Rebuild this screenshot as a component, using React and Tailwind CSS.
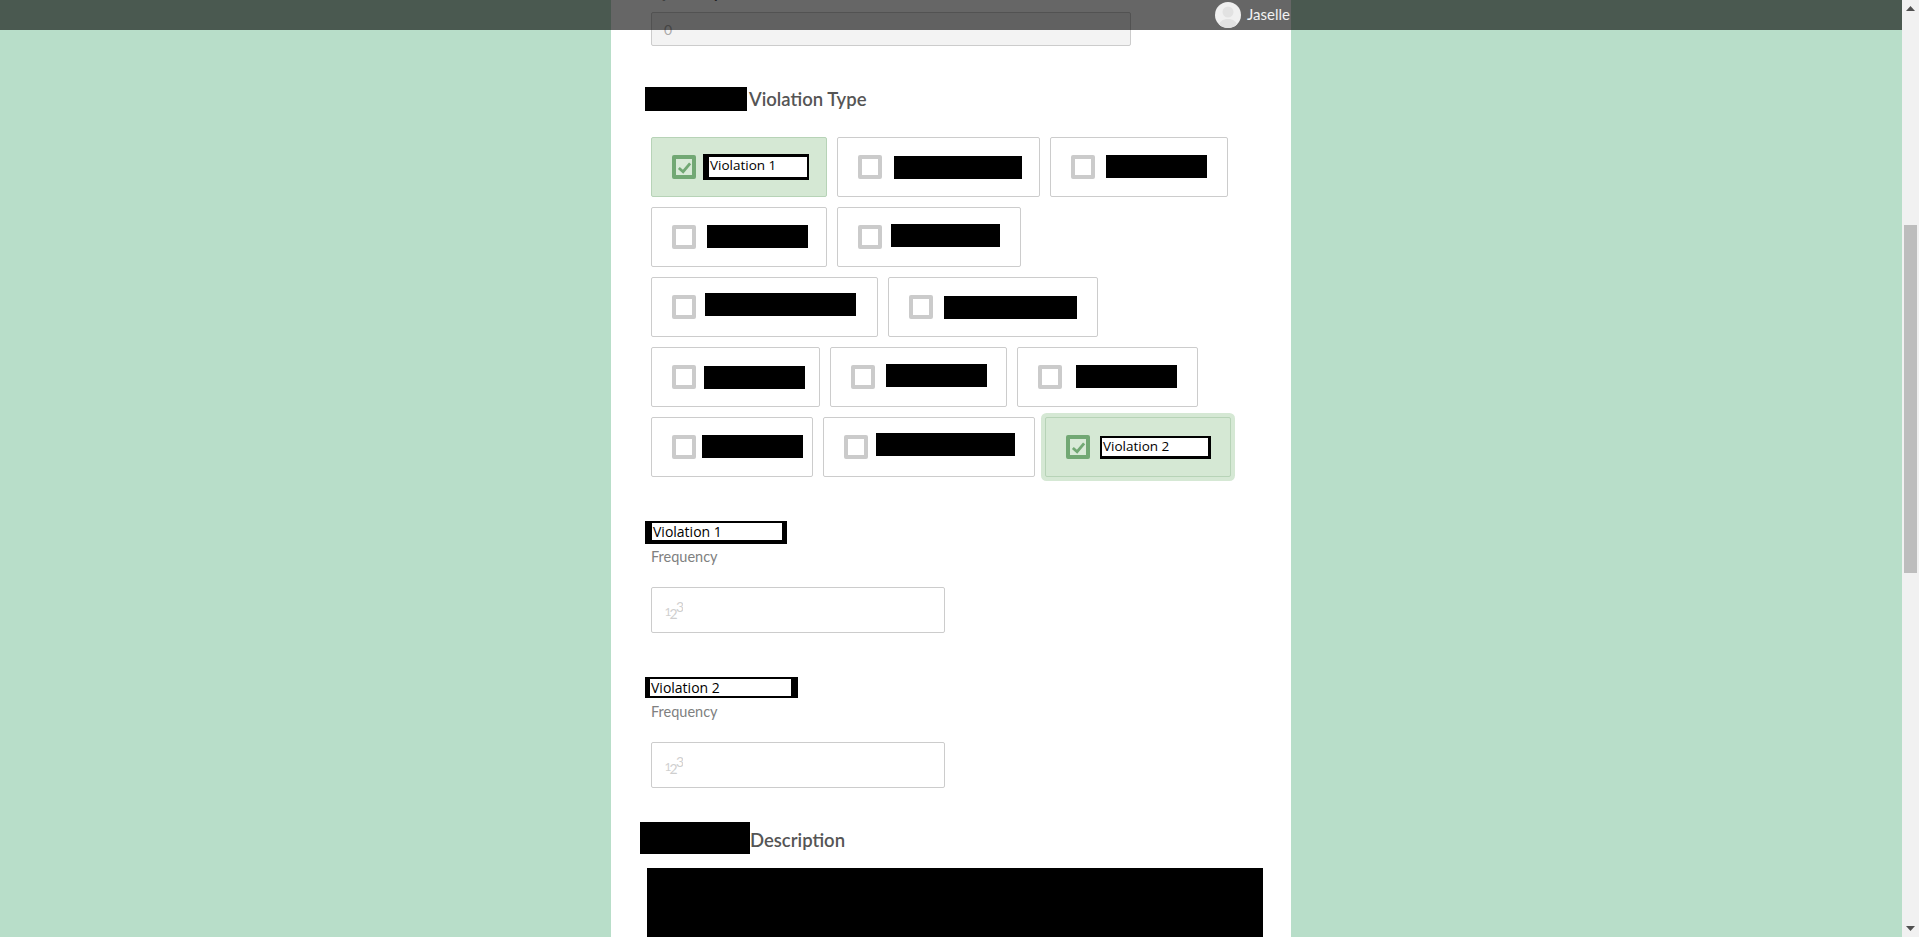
const rows = [
  [
    { w: 'w-[176px]', label: 'Violation 1', boxClass: 'ml-[7px] mt-[16px] w-[106px] h-[26px] border-l-[6px] border-r-[2px] border-y-[3px] pb-[2px]' },
    { w: 'w-[203px]', bar: 'ml-[12px] mt-[18px] w-[128px]' },
    { w: 'w-[178px]', bar: 'ml-[11px] mt-[17px] w-[101px]' },
  ],
  [
    { w: 'w-[176px]', bar: 'ml-[11px] mt-[17px] w-[101px]' },
    { w: 'w-[184px]', bar: 'ml-[9px] mt-[16px] w-[109px]' },
  ],
  [
    { w: 'w-[227px]', bar: 'ml-[9px] mt-[15px] w-[151px]' },
    { w: 'w-[210px]', bar: 'ml-[11px] mt-[18px] w-[133px]' },
  ],
  [
    { w: 'w-[169px]', bar: 'ml-[8px] mt-[18px] w-[101px]' },
    { w: 'w-[177px]', bar: 'ml-[11px] mt-[16px] w-[101px]' },
    { w: 'w-[181px]', bar: 'ml-[14px] mt-[17px] w-[101px]' },
  ],
  [
    { w: 'w-[162px]', bar: 'ml-[6px] mt-[17px] w-[101px]' },
    { w: 'w-[212px]', bar: 'ml-[8px] mt-[15px] w-[139px]' },
    { w: 'w-[186px]', label: 'Violation 2', glow: true, boxClass: 'ml-[10px] mt-[18px] w-[111px] h-[23px] border-l-[2px] border-r-[3px] border-t-[2px] border-b-[3px]' },
  ],
]

function Checkbox({ checked }) {
  if (checked) {
    return (
      <span className="mt-[17px] flex h-6 w-6 shrink-0 items-center justify-center rounded-[2px] border-[4px] border-[#72a874] bg-[#d9ead8]">
        <svg viewBox="0 0 16 16" className="h-[15px] w-[15px]" fill="none" stroke="#72a874" strokeWidth="3">
          <polyline points="2,8.5 6.5,12.5 14,3.5" />
        </svg>
      </span>
    )
  }
  return <span className="mt-[17px] block h-6 w-6 shrink-0 rounded-[2px] border-[4px] border-[#cbcbcb] bg-white" />
}

function Card({ item }) {
  const checked = !!item.label
  return (
    <div
      className={`flex h-[60px] items-start rounded-[2px] border pl-5 ${item.w} ${
        checked ? 'border-[#b7d3b7] bg-[#d5e8d4]' : 'border-[#cccccc] bg-white'
      } ${item.glow ? 'shadow-[0_0_0_4px_#d5e8d4]' : ''}`}
    >
      <Checkbox checked={checked} />
      {checked ? (
        <span className={`flex items-center border-black bg-white pl-[1px] font-['Open_Sans',sans-serif] text-[13.5px] leading-none text-black ${item.boxClass}`}>
          {item.label}
        </span>
      ) : (
        <span className={`block h-[23px] bg-black ${item.bar}`} />
      )}
    </div>
  )
}

function NumberIcon() {
  return (
    <svg width="18" height="18" viewBox="0 0 18 18" fill="#cfcfcf" fontFamily="Lato, sans-serif">
      <text x="-0.5" y="15" fontSize="12">1</text>
      <text x="4.5" y="18" fontSize="14">2</text>
      <text x="11" y="10.5" fontSize="14">3</text>
    </svg>
  )
}

function FrequencyField({ name, boxClass, labelGap }) {
  return (
    <div>
      <div className={`-ml-[6px] flex items-center border-black bg-white pl-[1px] pt-[1px] font-['Open_Sans',sans-serif] text-[14px] leading-none text-black ${boxClass}`}>
        {name}
      </div>
      <div className={`h-5 text-[14.5px] leading-5 text-[#808080] ${labelGap}`}>Frequency</div>
      <div className="mt-5 flex h-[46px] w-[294px] items-center rounded-[2px] border border-[#cccccc] bg-white pl-[13px]">
        <NumberIcon />
      </div>
    </div>
  )
}

function Scrollbar() {
  return (
    <div className="flex w-[17px] shrink-0 flex-col items-center justify-between bg-[#f1f1f1]">
      <div className="flex w-full flex-col items-center">
        <div className="flex h-[17px] items-center justify-center">
          <svg width="9" height="5" viewBox="0 0 9 5" fill="#505050"><polygon points="4.5,0 9,5 0,5" /></svg>
        </div>
        <div className="mt-[208px] h-[348px] w-[13px] bg-[#bdbdbd]" />
      </div>
      <div className="flex h-[17px] items-center justify-center">
        <svg width="9" height="5" viewBox="0 0 9 5" fill="#505050"><polygon points="0,0 9,0 4.5,5" /></svg>
      </div>
    </div>
  )
}

export default function App() {
  return (
    <div className="flex h-screen overflow-hidden font-['Lato',sans-serif]">
      <div className="relative flex-1 overflow-hidden bg-[#b8dec9]">
        <div className="absolute inset-x-0 top-0 z-10 h-[30px] bg-black/60">
          <div className="mx-auto flex h-full w-[680px] items-center justify-end gap-[6px] pr-px">
            <span className="flex h-[26px] w-[26px] items-center justify-center overflow-hidden rounded-full bg-[#f0f0f0]">
              <svg viewBox="0 0 26 26" className="h-[26px] w-[26px]" fill="#e2e2e2">
                <circle cx="13" cy="10" r="5.5" />
                <path d="M3 26c1-7 5-9 10-9s9 2 10 9z" />
              </svg>
            </span>
            <span className="-mt-[2px] text-[15px] text-[#f2f2f2]">Jaselle</span>
          </div>
        </div>

        <div className="mx-auto h-full w-[680px] overflow-hidden bg-white pl-10">
          {/* label scrolled under the top bar, only the tail of its last letter shows */}
          <div className="-mt-[21px] h-6 text-[18px] leading-6 font-semibold text-[#555555]">Quantity</div>
          <div className="mt-[9px] flex h-[34px] w-[480px] items-center rounded-[2px] border border-[#cccccc] bg-[#f3f3f3] pl-3 text-[14px] text-[#aaaaaa]">
            0
          </div>

          <div className="-ml-[6px] mt-[41px] flex items-center">
            <span className="block h-6 w-[102px] bg-black" />
            <h2 className="ml-[2px] text-[18.5px] leading-6 font-semibold text-[#555555]">Violation Type</h2>
          </div>

          <div className="mt-[26px] flex w-[600px] flex-wrap gap-[10px]">
            {rows.flat().map((item, i) => (
              <Card key={i} item={item} />
            ))}
          </div>

          <div className="mt-[44px]">
            <FrequencyField
              name="Violation 1"
              boxClass="h-[23px] w-[142px] border-l-[7px] border-r-[5px] border-t-[2px] border-b-[4px]"
              labelGap="mt-[3px]"
            />
          </div>
          <div className="mt-[44px]">
            <FrequencyField
              name="Violation 2"
              boxClass="h-[21px] w-[153px] border-l-[5px] border-r-[7px] border-y-[2px]"
              labelGap="mt-[4px]"
            />
          </div>

          <div className="-ml-[11px] mt-[34px] flex items-center">
            <span className="block h-8 w-[110px] bg-black" />
            <h2 className="pt-[5px] text-[18.5px] leading-[27px] font-semibold text-[#555555]">Description</h2>
          </div>
          <div className="-ml-[4px] mt-[14px] h-20 w-[616px] bg-black" />
        </div>
      </div>
      <Scrollbar />
    </div>
  )
}
